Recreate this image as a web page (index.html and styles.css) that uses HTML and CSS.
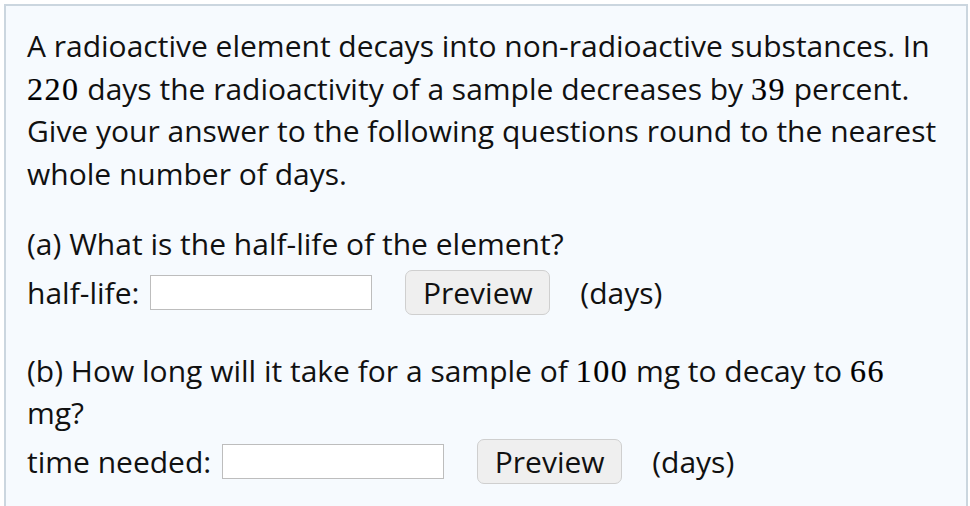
FILE: index.html
```html
<!DOCTYPE html>
<html>
<head>
<meta charset="utf-8">
<link rel="stylesheet" href="styles.css">
</head>
<body>
<div class="panel">
  <p class="intro">A radioactive element decays into non-radioactive substances. In <span class="m">220</span> days the radioactivity of a sample decreases by <span class="m">39</span> percent. Give your answer to the following questions round to the nearest whole number of days.</p>
  <div class="q qa">
    <div class="qtext">(a) What is the half-life of the element?</div>
    <div class="row">
      <span class="lbl">half-life:</span>
      <input class="ans" type="text">
      <button class="btn">Preview</button>
      <span class="unit">(days)</span>
    </div>
  </div>
  <div class="q qb">
    <div class="qtext">(b) How long will it take for a sample of <span class="m">100</span> mg to decay to <span class="m">66</span> mg?</div>
    <div class="row">
      <span class="lbl">time needed:</span>
      <input class="ans" type="text">
      <button class="btn">Preview</button>
      <span class="unit">(days)</span>
    </div>
  </div>
</div>
</body>
</html>
```
FILE: styles.css
```css
html, body {
  margin: 0;
  padding: 0;
  background: #ffffff;
}
body {
  padding: 4px 2px 0 4px;
  font-family: "Open Sans", sans-serif;
  font-size: 30px;
  color: #111;
}
.panel {
  background: #f6fafe;
  border: 2px solid #cbd6df;
  border-bottom: none;
  padding: 19px 24px 30px 21px;
  height: 502px;
  box-sizing: border-box;
}
.intro {
  margin: 0;
  line-height: 42.5px;
}
.m {
  font-family: "Liberation Serif", serif;
  font-size: 32px;
  line-height: 1;
  letter-spacing: 1.5px;
  color: #000;
  -webkit-text-stroke: 0.2px #000;
}
.qa {
  margin-top: 28px;
}
.qb {
  margin-top: 30px;
}
.qtext {
  line-height: 42px;
}
.row {
  display: flex;
  align-items: center;
  height: 55px;
}
.lbl {
  margin-right: 11px;
}
.ans {
  width: 222px;
  height: 35px;
  box-sizing: border-box;
  border: 1px solid #bdbdbd;
  background: #fff;
  margin: 0 33px 0 0;
  padding: 0;
}
.btn {
  font-family: "Open Sans", sans-serif;
  font-size: 30px;
  color: #111;
  width: 145px;
  height: 45px;
  border: 1px solid #cfcfcf;
  border-radius: 7px;
  background: #efefef;
  margin: 0 30px 0 0;
  padding: 0;
}
```
